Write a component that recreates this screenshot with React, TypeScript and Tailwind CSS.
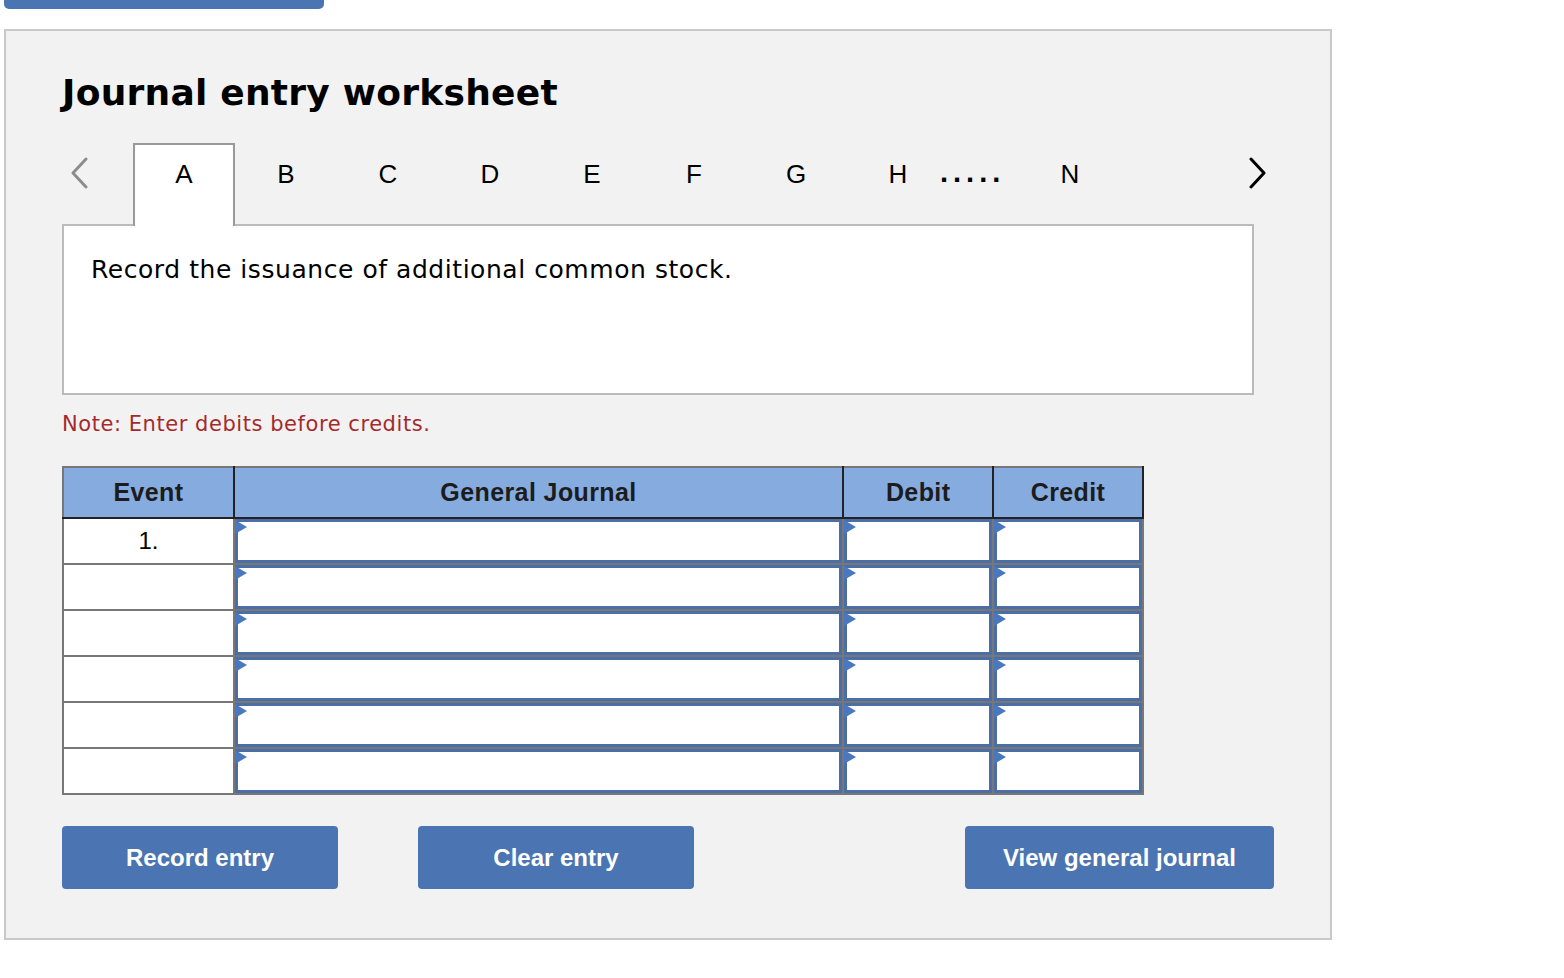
const tabs = ["A", "B", "C", "D", "E", "F", "G", "H"];

function InputCell() {
  return (
    <div className="relative h-full w-full border-[3px] border-[#4b6ea6] bg-white">
      {/* little marker in the corner */}
      <span className="absolute left-[-3px] top-[-2px] h-0 w-0 border-y-[7px] border-l-[12px] border-y-transparent border-l-[#4a78c0]" />
    </div>
  );
}

export default function App() {
  const rows = ["1.", "", "", "", "", ""];

  return (
    <div className="min-h-[978px] w-[1564px] bg-white font-['DejaVu_Sans',sans-serif] text-black">
      <div className="ml-[4px] h-[9px] w-[320px] rounded-b-[5px] bg-[#4a74b2]" />

      <div className="ml-[4px] mt-[20px] h-[911px] w-[1328px] border-2 border-[#c9c9c9] bg-[#f2f2f2] pl-[56px] pt-[38px]">
        <h1 className="text-[36px] font-bold leading-[48px] tracking-[0.25px]">Journal entry worksheet</h1>

        {/* tabs */}
        <div className="mt-[26px] flex h-[83px] w-[1210px] items-start font-['Liberation_Sans',sans-serif] text-[26px]">
          <div className="flex w-[71px] pl-[7px] pt-[14px]">
            <svg width="20" height="32" viewBox="0 0 20 32" fill="none">
              <path d="M17 2 L4 16 L17 30" stroke="#8c8c8c" strokeWidth="3" strokeLinecap="round" strokeLinejoin="round" />
            </svg>
          </div>
          {tabs.map((t, i) => (
            <div
              key={t}
              className={
                i === 0
                  ? "relative z-10 flex h-[83px] w-[102px] justify-center border-2 border-b-0 border-[#999] bg-white pt-[10px]"
                  : "flex h-[83px] w-[102px] justify-center pt-[12px]"
              }
            >
              {t}
            </div>
          ))}
          <div className="ml-[-9px] w-[79px] pt-[8px] text-[29px] font-bold tracking-[5px]">.....</div>
          <div className="flex w-[102px] justify-center pt-[12px]">N</div>
          <div className="flex flex-1 justify-end pr-[4px] pt-[14px]">
            <svg width="20" height="32" viewBox="0 0 20 32" fill="none">
              <path d="M3 2 L16 16 L3 30" stroke="#000" strokeWidth="3" strokeLinecap="round" strokeLinejoin="round" />
            </svg>
          </div>
        </div>

        <div className="relative mt-[-2px] h-[171px] w-[1192px] border-2 border-[#bbb] bg-white px-[27px] pt-[28px] text-[25px] leading-[32px] tracking-[0.55px]">
          Record the issuance of additional common stock.
        </div>

        <p className="mt-[15px] text-[21px] leading-[28px] tracking-[0.55px] text-[#a52a2a]">Note: Enter debits before credits.</p>

        {/* journal table */}
        <table className="mt-[28px] w-[1082px] border-collapse font-['Liberation_Sans',sans-serif]">
          <thead>
            <tr className="h-[51px] bg-[#85abdf] text-[25px] font-bold tracking-[0.4px] text-[#1c1c1c]">
              <th className="w-[171px] border-2 border-[#222] border-l-[#777] border-t-[#777]">Event</th>
              <th className="w-[610px] border-2 border-[#222] border-t-[#777]">General Journal</th>
              <th className="w-[150px] border-2 border-[#222] border-t-[#777]">Debit</th>
              <th className="w-[150px] border-2 border-[#222] border-t-[#777]">Credit</th>
            </tr>
          </thead>
          <tbody>
            {rows.map((r, i) => (
              <tr key={i} className="h-[46px]">
                <td className="border-2 border-[#777] bg-white text-center align-middle text-[24px]">{r}</td>
                <td className="h-[46px] border-2 border-[#777] p-0">
                  <InputCell />
                </td>
                <td className="h-[46px] border-2 border-[#777] p-0">
                  <InputCell />
                </td>
                <td className="h-[46px] border-2 border-[#777] p-0">
                  <InputCell />
                </td>
              </tr>
            ))}
          </tbody>
        </table>

        <div className="mt-[31px] flex w-[1212px] font-['Liberation_Sans',sans-serif] text-[24px] font-bold text-white">
          <button className="h-[63px] w-[276px] rounded-[4px] bg-[#4a74b2]">Record entry</button>
          <button className="ml-[80px] h-[63px] w-[276px] rounded-[4px] bg-[#4a74b2]">Clear entry</button>
          <button className="ml-auto h-[63px] w-[309px] rounded-[4px] bg-[#4a74b2]">View general journal</button>
        </div>
      </div>
    </div>
  );
}
